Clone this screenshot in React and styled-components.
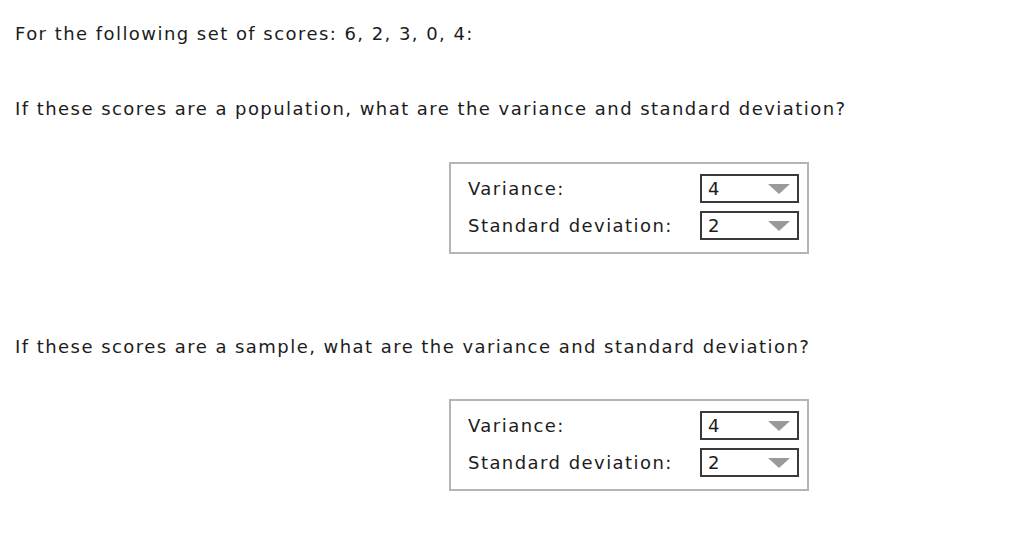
import React from "react";
import styled, { createGlobalStyle } from "styled-components";

const GlobalStyle = createGlobalStyle`
  body {
    margin: 0;
    background: #fff;
    font-family: "DejaVu Sans", Verdana, sans-serif;
    color: #1c1c1c;
  }
`;

const Page = styled.div`
  padding: 22px 15px 0 15px;
`;

const Question = styled.p`
  margin: 0 0 ${(p) => p.gap || 0}px 0;
  font-size: 18px;
  line-height: 24px;
  letter-spacing: 1.45px;
  white-space: nowrap;
`;

const AnswerBox = styled.div`
  margin: 0 0 ${(p) => p.gap || 0}px 434px;
  width: 360px;
  border: 2px solid #b4b4b4;
  box-sizing: border-box;
  padding: 10px 8px 12px 17px;
  display: grid;
  grid-template-columns: 1fr 99px;
  grid-auto-rows: 29px;
  row-gap: 8px;
  align-items: center;
`;

const Label = styled.span`
  font-size: 18px;
  letter-spacing: 1.45px;
  white-space: nowrap;
`;

const Select = styled.div`
  height: 29px;
  border: 2px solid #3a3a3a;
  box-sizing: border-box;
  display: flex;
  align-items: center;
  justify-content: space-between;
  padding: 0 7px 0 6px;
  font-size: 18px;
`;

const Arrow = () => (
  <svg width="22" height="10" viewBox="0 0 22 10">
    <polygon points="0,0 22,0 11,10" fill="#9a9a9a" />
  </svg>
);

const Answers = ({ gap }) => (
  <AnswerBox gap={gap}>
    <Label>Variance:</Label>
    <Select>
      4<Arrow />
    </Select>
    <Label>Standard deviation:</Label>
    <Select>
      2<Arrow />
    </Select>
  </AnswerBox>
);

export default function App() {
  return (
    <>
      <GlobalStyle />
      <Page>
        <Question gap={51}>For the following set of scores: 6, 2, 3, 0, 4:</Question>
        <Question gap={41}>
          If these scores are a population, what are the variance and standard deviation?
        </Question>
        <Answers gap={81} />
        <Question gap={40}>
          If these scores are a sample, what are the variance and standard deviation?
        </Question>
        <Answers />
      </Page>
    </>
  );
}
